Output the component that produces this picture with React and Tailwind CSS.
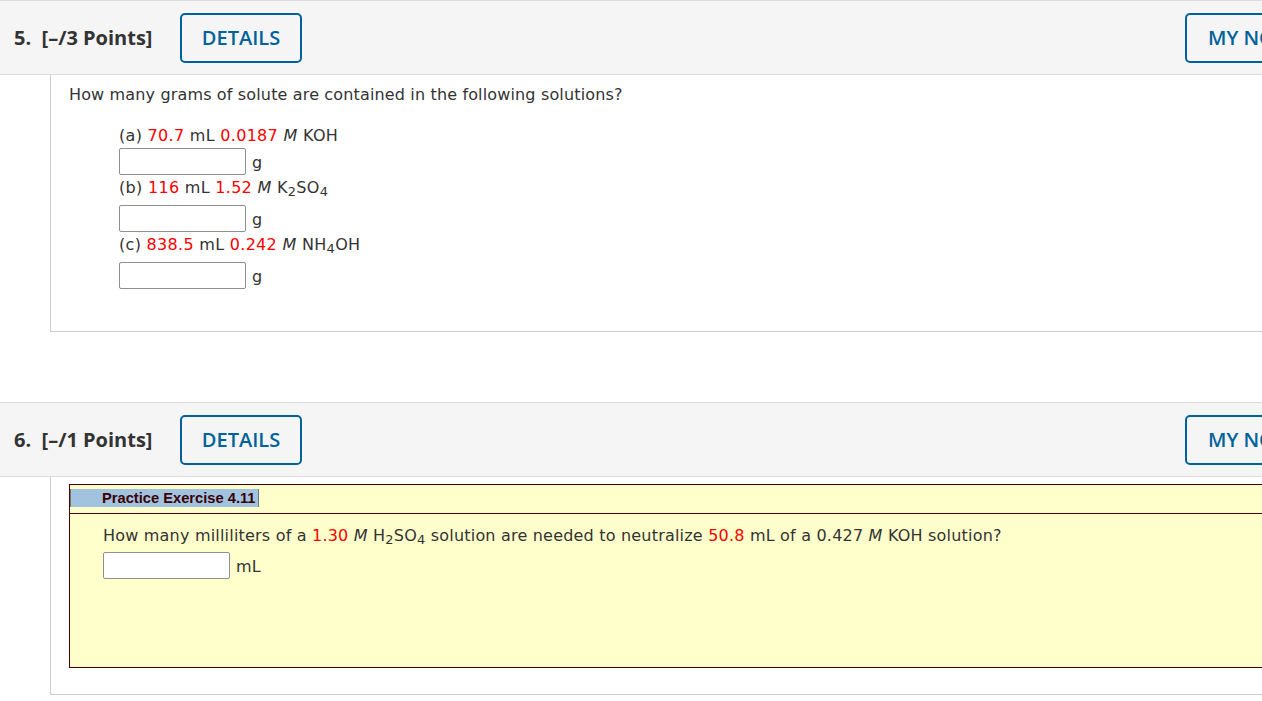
export default function App() {
  const q = { fontFamily: '"DejaVu Sans", Verdana, sans-serif' };
  const red = "text-[#ff0000]";
  const Input = ({ w = "w-[127px]" }) => (
    <input className={`${w} h-[27px] border border-[#8f8f8f] bg-white rounded-[2px]`} />
  );
  const Header = ({ n, pts }) => (
    <div
      className="h-[75px] bg-[#f5f5f5] border-y border-[#dcdcdc] flex items-center pl-[14px] pt-[1px]"
      style={{ fontFamily: '"Open Sans", sans-serif' }}
    >
      <div className="w-[166px] text-[20px] font-bold text-[#333] whitespace-pre">
        {n}.  [–/{pts} Points]
      </div>
      <button className="w-[122px] h-[50px] border-2 border-[#00629b] rounded-[5px] text-[20px] font-semibold text-[#00629b]">
        DETAILS
      </button>
      <div className="flex-1" />
      <button className="w-[140px] h-[50px] border-2 border-[#00629b] rounded-[5px] text-[20px] font-semibold text-[#00629b] text-left pl-[21px] -mr-[63px] shrink-0 whitespace-nowrap">
        MY NOTES
      </button>
    </div>
  );
  return (
    <div className="w-[1262px] h-[701px] overflow-hidden bg-white">
      <Header n={5} pts={3} />
      <div className="ml-[50px] border-l border-b border-[#cccccc] h-[257px] pl-[18px] pt-[9px] text-[16px] tracking-[0.15px] text-[#333]" style={q}>
        <div className="leading-[22px]">How many grams of solute are contained in the following solutions?</div>
        <div className="pl-[50px] mt-[20px] tracking-[0.3px]">
          <div className="leading-[20px]">
            (a) <span className={red}>70.7</span> mL <span className={red}>0.0187</span> <i>M</i> KOH
          </div>
          <div className="flex items-end gap-[6px] mt-[2px]">
            <Input />
            <span>g</span>
          </div>
          <div className="leading-[20px] mt-[3px]">
            (b) <span className={red}>116</span> mL <span className={red}>1.52</span> <i>M</i> K<sub className="text-[13px]">2</sub>SO<sub className="text-[13px]">4</sub>
          </div>
          <div className="flex items-end gap-[6px] mt-[7px]">
            <Input />
            <span>g</span>
          </div>
          <div className="leading-[20px] mt-[3px]">
            (c) <span className={red}>838.5</span> mL <span className={red}>0.242</span> <i>M</i> NH<sub className="text-[13px]">4</sub>OH
          </div>
          <div className="flex items-end gap-[6px] mt-[7px]">
            <Input />
            <span>g</span>
          </div>
        </div>
      </div>
      <div className="h-[70px]" />
      <Header n={6} pts={1} />
      <div className="ml-[50px] border-l border-b border-[#cccccc] h-[218px] pl-[18px] pt-[7px]">
        <div className="h-[184px] bg-[#ffffcc] border border-[#4d0000] border-r-0">
          <div className="h-[29px] border-b border-[#4d0000] pt-[4px]">
            <div
              className="w-[189px] h-[18px] bg-[#a2c3e0] border-l border-r border-[#777] pl-[31px] text-[14.7px] leading-[18px] font-bold text-[#3a0000] whitespace-nowrap"
              style={{ fontFamily: '"Liberation Sans", Arial, sans-serif' }}
            >
              Practice Exercise 4.11
            </div>
          </div>
          <div className="pl-[33px] pt-[12px] text-[16px] tracking-[0.2px] text-[#333]" style={q}>
            <div className="leading-[20px]">
              How many milliliters of a <span className={red}>1.30</span> <i>M</i> H<sub className="text-[13px]">2</sub>SO<sub className="text-[13px]">4</sub> solution are needed to neutralize <span className={red}>50.8</span> mL of a 0.427 <i>M</i> KOH solution?
            </div>
            <div className="flex items-end gap-[6px] mt-[6px]">
              <Input />
              <span>mL</span>
            </div>
          </div>
        </div>
      </div>
    </div>
  );
}
